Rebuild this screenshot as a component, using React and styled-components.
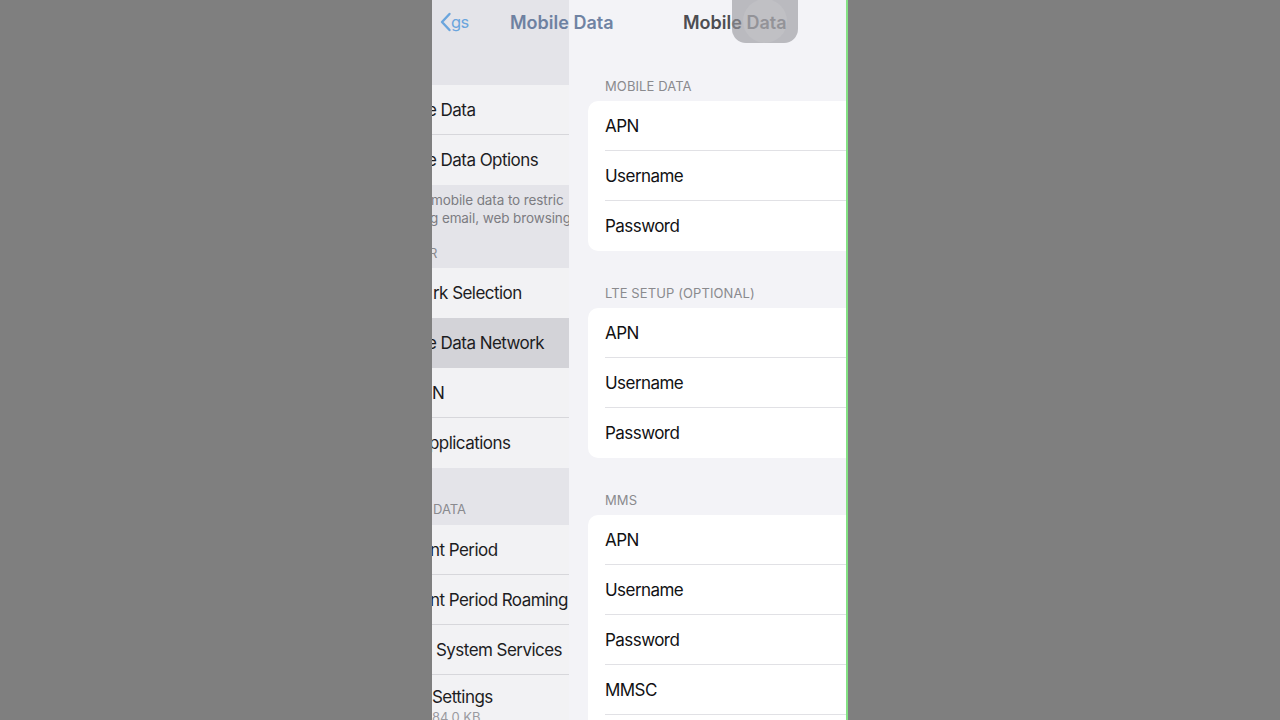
import React from "react";
import styled, { createGlobalStyle } from "styled-components";

const Global = createGlobalStyle`
  html, body { margin: 0; padding: 0; background: #7f7f7f; overflow: hidden; }
  body { font-family: Inter, "Noto Sans", "Liberation Sans", sans-serif; -webkit-font-smoothing: antialiased; }
`;

const Stage = styled.div`
  width: 1280px;
  height: 720px;
  display: flex;
  justify-content: center;
  background: #7f7f7f;
  overflow: hidden;
`;

const Phone = styled.div`
  position: relative;
  width: 414px;
  height: 720px;
  display: flex;
  overflow: hidden;
  border-right: 2px solid #84e184;
`;

const LeftPanel = styled.div`
  width: 137px;
  flex-shrink: 0;
  background: #e4e4e9;
  display: flex;
  flex-direction: column;
  overflow: hidden;
  & > * { flex-shrink: 0; }
`;

const LeftTop = styled.div`
  height: 85px;
`;

const LGroup = styled.div`
  display: flex;
  flex-direction: column;
  background: #f2f2f4;
`;

const LRow = styled.div`
  height: ${(p) => p.$h || 50}px;
  flex-shrink: 0;
  box-sizing: border-box;
  display: flex;
  flex-direction: column;
  justify-content: ${(p) => (p.$top ? "flex-start" : "center")};
  padding-top: ${(p) => (p.$top ? 12 : 0)}px;
  background: ${(p) => (p.$active ? "#d3d3d8" : "transparent")};
  border-bottom: 1px solid ${(p) => (p.$sep ? "#d7d7db" : "transparent")};
  white-space: nowrap;
  overflow: hidden;
`;

const LText = styled.span`
  display: block;
  font-size: 17px;
  line-height: 20px;
  color: #1d1d1f;
  letter-spacing: -0.55px;
  text-indent: ${(p) => p.$cut || 0}px;
`;

const LSub = styled.span`
  display: block;
  font-size: 13px;
  line-height: 16px;
  color: #9a9aa0;
  margin-top: 2px;
  text-indent: ${(p) => p.$cut || 0}px;
`;

const LFooter = styled.div`
  padding-top: 6px;
  font-size: 13.5px;
  line-height: 18px;
  color: #7c7c82;
  letter-spacing: -0.1px;
  white-space: nowrap;
  display: flex;
  flex-direction: column;
  overflow: hidden;
`;

const LFootLine = styled.span`
  text-indent: ${(p) => p.$cut || 0}px;
`;

const LHeader = styled.div`
  height: ${(p) => p.$h}px;
  box-sizing: border-box;
  display: flex;
  align-items: flex-end;
  padding-bottom: ${(p) => p.$pb || 7}px;
  font-size: 13px;
  line-height: 16px;
  color: #8a8a8f;
  white-space: nowrap;
  text-indent: ${(p) => p.$cut || 0}px;
`;

const RightPanel = styled.div`
  flex: 1;
  background: #f3f3f7;
  display: flex;
  flex-direction: column;
  padding-top: 78px;
  overflow: hidden;
  & > * { flex-shrink: 0; }
`;

const SectionHeader = styled.div`
  padding: 0 0 7px 36px;
  font-size: 13px;
  line-height: 16px;
  color: #8a8a8e;
  letter-spacing: 0.1px;
  text-transform: uppercase;
`;

const Card = styled.div`
  margin: 0 0 34px 19px;
  background: #ffffff;
  border-radius: 10px 0 0 10px;
  padding-left: 17px;
  display: flex;
  flex-direction: column;
`;

const Row = styled.div`
  height: 50px;
  flex-shrink: 0;
  box-sizing: border-box;
  display: flex;
  align-items: center;
  font-size: 17px;
  color: #111113;
  letter-spacing: -0.55px;
  border-bottom: 1px solid #e1e1e5;
  &:last-child { border-bottom-color: transparent; }
`;

const NavBar = styled.div`
  position: absolute;
  top: 0;
  left: 0;
  right: 0;
  height: 44px;
  display: flex;
  align-items: center;
  padding-left: 7px;
  pointer-events: none;
`;

const Back = styled.div`
  display: flex;
  align-items: center;
  color: #6aa5dd;
  font-size: 16.5px;
  letter-spacing: -0.5px;
  width: 71px;
  flex-shrink: 0;
`;

const BackLabel = styled.span`
  margin-left: -1px;
`;

const LeftTitle = styled.div`
  font-size: 18px;
  font-weight: 600;
  color: #62779a;
  letter-spacing: 0px;
  width: 173px;
  flex-shrink: 0;
  opacity: 0.9;
`;

const RightTitle = styled.div`
  font-size: 18px;
  font-weight: 600;
  color: #4d4d52;
  letter-spacing: 0px;
`;

const Touch = styled.div`
  position: absolute;
  left: 300px;
  top: -22px;
  width: 66px;
  height: 65px;
  border-radius: 14px;
  background: rgba(150, 150, 156, 0.62);
  display: flex;
  align-items: center;
  justify-content: center;
  &::after {
    content: "";
    width: 44px;
    height: 44px;
    margin-top: 20px;
    border-radius: 50%;
    background: rgba(205, 205, 210, 0.3);
  }
`;

const sections = [
  { title: "Mobile Data", rows: ["APN", "Username", "Password"] },
  { title: "LTE Setup (Optional)", rows: ["APN", "Username", "Password"] },
  { title: "MMS", rows: ["APN", "Username", "Password", "MMSC", "MMS Proxy"] },
];

export default function App() {
  return (
    <Stage>
      <Global />
      <Phone>
        <LeftPanel>
          <LeftTop />
          <LGroup>
            <LRow $sep><LText $cut={-5}>e Data</LText></LRow>
            <LRow><LText $cut={-5}>e Data Options</LText></LRow>
          </LGroup>
          <LFooter>
            <LFootLine $cut={-1}> mobile data to restric</LFootLine>
            <LFootLine $cut={-2}>g email, web browsing</LFootLine>
          </LFooter>
          <LHeader $h={41} $cut={-3}>R</LHeader>
          <LGroup>
            <LRow><LText $cut={1}>rk Selection</LText></LRow>
            <LRow $active><LText $cut={-5}>e Data Network</LText></LRow>
            <LRow $sep><LText>N</LText></LRow>
            <LRow><LText $cut={-3}>pplications</LText></LRow>
          </LGroup>
          <LHeader $h={57} $pb={8} $cut={1}> DATA</LHeader>
          <LGroup>
            <LRow $sep><LText $cut={-2}>nt Period</LText></LRow>
            <LRow $sep><LText $cut={-2}>nt Period Roaming</LText></LRow>
            <LRow $sep><LText $cut={4}>System Services</LText></LRow>
            <LRow $h={70} $top><LText>Settings</LText><LSub>84.0 KB</LSub></LRow>
          </LGroup>
        </LeftPanel>
        <RightPanel>
          {sections.map((s) => (
            <React.Fragment key={s.title}>
              <SectionHeader>{s.title}</SectionHeader>
              <Card>
                {s.rows.map((r) => (
                  <Row key={r}>{r}</Row>
                ))}
              </Card>
            </React.Fragment>
          ))}
        </RightPanel>
        <NavBar>
          <Back>
            <svg width="13" height="20" viewBox="0 0 13 20" fill="none">
              <path d="M10.5 2 L3 10 L10.5 18" stroke="#6aa5dd" strokeWidth="2.4" strokeLinecap="round" strokeLinejoin="round" />
            </svg>
            <BackLabel>gs</BackLabel>
          </Back>
          <LeftTitle>Mobile Data</LeftTitle>
          <RightTitle>Mobile Data</RightTitle>
        </NavBar>
        <Touch />
      </Phone>
    </Stage>
  );
}
